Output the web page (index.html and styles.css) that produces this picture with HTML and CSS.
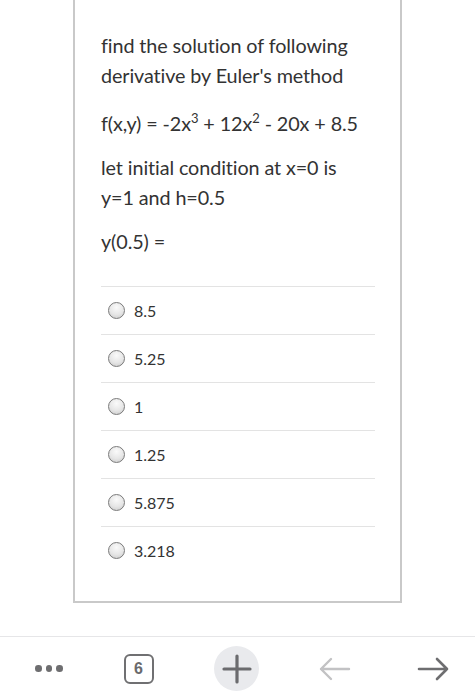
FILE: index.html
```html
<!DOCTYPE html>
<html>
<head>
<meta charset="utf-8">
<link rel="stylesheet" href="styles.css">
</head>
<body>
<div class="page">
  <div class="card">
    <p class="q">find the solution of following derivative by Euler's method</p>
    <p class="q">f(x,y) = -2x<sup>3</sup> + 12x<sup>2</sup> - 20x + 8.5</p>
    <p class="q">let initial condition at x=0 is<br>y=1 and h=0.5</p>
    <p class="q">y(0.5) =</p>
    <div class="options">
      <div class="opt"><span class="radio"></span><span>8.5</span></div>
      <div class="opt"><span class="radio"></span><span>5.25</span></div>
      <div class="opt"><span class="radio"></span><span>1</span></div>
      <div class="opt"><span class="radio"></span><span>1.25</span></div>
      <div class="opt"><span class="radio"></span><span>5.875</span></div>
      <div class="opt"><span class="radio"></span><span>3.218</span></div>
    </div>
  </div>
</div>
<div class="bar">
  <div class="item dots"><span></span><span></span><span></span></div>
  <div class="item"><span class="tabs">6</span></div>
  <div class="item"><span class="plus">
    <svg width="30" height="30" viewBox="0 0 30 30"><path d="M15 2V28M2 15H28" stroke="#6b6b6e" stroke-width="3.2" stroke-linecap="round"/></svg>
  </span></div>
  <div class="item">
    <svg width="32" height="24" viewBox="0 0 32 24"><path d="M30 12H2M12 2L2 12L12 22" fill="none" stroke="#c2c2c4" stroke-width="2.4" stroke-linecap="round" stroke-linejoin="round"/></svg>
  </div>
  <div class="item">
    <svg width="32" height="24" viewBox="0 0 32 24"><path d="M2 12H30M20 2L30 12L20 22" fill="none" stroke="#6e6e70" stroke-width="2.6" stroke-linecap="round" stroke-linejoin="round"/></svg>
  </div>
</div>
</body>
</html>
```

FILE: styles.css
```css
html, body {
  margin: 0;
  padding: 0;
  background: #fff;
}
body {
  width: 475px;
  height: 700px;
  overflow: hidden;
  font-family: Lato, "Liberation Sans", sans-serif;
  color: #333;
}
.page {
  height: 636px;
  padding-left: 73px;
}
.card {
  width: 274px;
  height: 571px;
  border: 2px solid #c9c9c9;
  border-top: none;
  padding: 30px 25px 0 26px;
}
.q {
  margin: 0 0 14px;
  font-size: 19.8px;
  line-height: 30px;
  letter-spacing: -0.1px;
  white-space: nowrap;
}
.q:first-child {
  white-space: normal;
}
.q sup {
  font-size: 13px;
  line-height: 0;
  vertical-align: 8px;
}
.q:nth-child(2) {
  margin-top: 18px;
}
.options {
  margin-top: 30px;
}
.opt {
  display: flex;
  align-items: center;
  height: 47px;
  border-top: 1.5px solid #e3e3e3;
  font-size: 16px;
  color: #333;
}
.radio {
  width: 15px;
  height: 15px;
  border: 1.3px solid #7a7a7a;
  border-radius: 50%;
  background: radial-gradient(circle at 50% 30%, #fafafa 0%, #e6e6e6 55%, #c8c8c8 100%);
  margin: 0 9px 0 7px;
  flex: none;
}
.bar {
  height: 63px;
  border-top: 1px solid #e6e6e8;
  display: flex;
  align-items: center;
  padding-left: 19px;
  gap: 38px;
}
.item {
  width: 60px;
  display: flex;
  justify-content: center;
  align-items: center;
}
.item:first-child {
  margin-right: -8.5px;
}
.dots {
  gap: 4px;
}
.dots span {
  width: 6.5px;
  height: 6.5px;
  border-radius: 50%;
  background: #6e6e70;
}
.tabs {
  width: 26px;
  height: 26px;
  border: 2.5px solid #707072;
  border-radius: 6px;
  display: flex;
  align-items: center;
  justify-content: center;
  font-family: "Liberation Sans", sans-serif;
  font-size: 16px;
  font-weight: bold;
  color: #6a6a6c;
}
.plus {
  width: 45px;
  height: 45px;
  border-radius: 50%;
  background: #e9eaed;
  display: flex;
  align-items: center;
  justify-content: center;
}
```
